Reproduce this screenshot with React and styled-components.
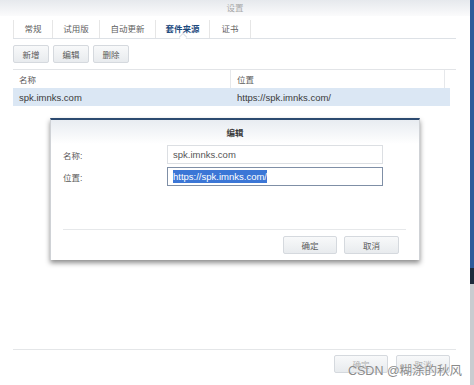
import React from "react";
import styled, { createGlobalStyle } from "styled-components";

const Global = createGlobalStyle`
  html, body { margin: 0; padding: 0; background: #ffffff; }
  body { font-family: "Liberation Sans", "Noto Sans CJK SC", sans-serif; }
  #root { width: 474px; height: 385px; overflow: hidden; }
`;

const CJK = `"Liberation Sans", "Noto Sans CJK SC", sans-serif`;

const Screen = styled.div`
  display: flex;
  width: 474px;
  height: 385px;
`;

const Win = styled.div`
  position: relative;
  width: 470px;
  height: 385px;
  background: #ffffff;
  display: flex;
  flex-direction: column;
`;

const Strip = styled.div`
  width: 4px;
  display: flex;
  flex-direction: column;
`;

const StripPart = styled.div`
  height: ${(p) => p.h}px;
  flex: ${(p) => (p.h ? "none" : 1)};
  background: ${(p) => p.c};
`;

const Header = styled.div`
  height: 16px;
  line-height: 16px;
  text-align: center;
  font-family: ${CJK};
  font-size: 8.5px;
  color: #a8a8a8;
  background: linear-gradient(#e6e9ed, #fbfbfc);
`;

const Tabs = styled.div`
  margin: 0 14px 0 13px;
  height: 22px;
  display: flex;
  border-bottom: 1px solid #dde1e6;
  position: relative;
`;

const Tab = styled.div`
  position: relative;
  width: ${(p) => p.w}px;
  display: flex;
  align-items: center;
  justify-content: center;
  font-family: ${CJK};
  font-size: 8.5px;
  color: ${(p) => (p.active ? "#1d4a7e" : "#606060")};
  font-weight: ${(p) => (p.active ? 700 : 400)};
  border-right: 1px solid #e6e6e6;
  margin: 4px 0 0;
  padding-bottom: 3px;
  &:first-child { border-left: 1px solid #e6e6e6; }
  ${(p) =>
    p.active &&
    `
    &::after {
      content: "";
      position: absolute;
      left: 50%;
      bottom: -2px;
      margin-left: -3px;
      width: 5px;
      height: 5px;
      background: #fff;
      border-left: 1px solid #dde1e6;
      border-top: 1px solid #dde1e6;
      transform: rotate(45deg);
    }
  `}
`;

const Toolbar = styled.div`
  display: flex;
  gap: 4px;
  margin: 6px 0 0 13px;
`;

const Btn = styled.div`
  width: ${(p) => p.w || 36}px;
  height: 18px;
  box-sizing: border-box;
  border: 1px solid #d5d9de;
  border-radius: 2px;
  background: linear-gradient(#f8f9fa, #e8ebee);
  display: flex;
  align-items: center;
  justify-content: center;
  font-family: ${CJK};
  font-size: 8.5px;
  color: #5a5a5a;
`;

const Table = styled.div`
  margin: 6px 14px 0 13px;
  border-top: 1px solid #e2e4e7;
`;

const Row = styled.div`
  display: grid;
  grid-template-columns: 218px 214px 5px;
  height: ${(p) => p.h}px;
  width: 437px;
  background: ${(p) => (p.sel ? "#dbe7f4" : "transparent")};
`;

const Cell = styled.div`
  display: flex;
  align-items: center;
  padding-left: 6px;
  font-family: ${(p) => (p.latin ? `"Liberation Sans", sans-serif` : CJK)};
  font-size: ${(p) => (p.latin ? "9.5px" : "8.5px")};
  color: ${(p) => (p.latin ? "#3a3a3a" : "#5a5a5a")};
  border-right: ${(p) => (p.div ? "1px solid #e6e8eb" : "none")};
  white-space: nowrap;
`;

const Spacer = styled.div`
  flex: 1;
`;

const Footer = styled.div`
  margin: 0 14px 0 13px;
  border-top: 1px solid #e4e6e8;
  height: 30px;
  display: flex;
  justify-content: flex-end;
  align-items: flex-start;
  padding-top: 5px;
  gap: 8px;
  padding-right: 6px;
`;

const FootBtn = styled(Btn)`
  color: #b0b0b0;
`;

const Watermark = styled.div`
  position: absolute;
  left: 348px;
  top: 360px;
  font-family: "Liberation Sans", "Noto Sans CJK SC", sans-serif;
  font-size: 12.5px;
  color: #8a8a8a;
  text-shadow: 0 0 1px #fff;
  white-space: nowrap;
`;

const Dialog = styled.div`
  position: absolute;
  left: 50px;
  top: 118px;
  width: 370px;
  height: 142px;
  box-sizing: border-box;
  background: #ffffff;
  border-top: 2px solid #2c4a70;
  border-left: 1px solid #cfd2d6;
  border-right: 1px solid #cfd2d6;
  box-shadow: 0 3px 5px rgba(0, 0, 0, 0.45);
  display: flex;
  flex-direction: column;
`;

const DlgHead = styled.div`
  height: 24px;
  display: flex;
  align-items: center;
  justify-content: center;
  font-family: ${CJK};
  font-size: 8.5px;
  font-weight: 700;
  color: #3a3a3a;
  background: linear-gradient(#e8ecf1, #ffffff);
`;

const Form = styled.div`
  display: flex;
  flex-direction: column;
  gap: 3px;
  padding: 1px 0 0 12px;
`;

const FormRow = styled.div`
  display: flex;
  align-items: center;
  height: 19px;
`;

const Label = styled.div`
  width: 104px;
  font-family: ${CJK};
  font-size: 8.5px;
  color: #5a5a5a;
`;

const Field = styled.div`
  width: 216px;
  height: 19px;
  box-sizing: border-box;
  border: 1px solid ${(p) => (p.focus ? "#7f8fa6" : "#dcdfe3")};
  display: flex;
  align-items: center;
  padding-left: 5px;
  font-family: "Liberation Sans", sans-serif;
  font-size: 9.5px;
  color: #555;
  white-space: nowrap;
`;

const Selected = styled.span`
  background: #3b76d6;
  color: #ffffff;
  padding: 1px 0;
`;

const DlgSep = styled.div`
  margin: auto 13px 0 12px;
  border-top: 1px solid #e6e8ea;
`;

const DlgFoot = styled.div`
  display: flex;
  justify-content: flex-end;
  gap: 7px;
  padding: 6px 20px 6px 0;
`;

export default function App() {
  return (
    <>
      <Global />
      <Screen>
        <Win>
          <Header>设置</Header>
          <Tabs>
            <Tab w={38}>常规</Tab>
            <Tab w={46}>试用版</Tab>
            <Tab w={55}>自动更新</Tab>
            <Tab w={53} active>套件来源</Tab>
            <Tab w={40}>证书</Tab>
          </Tabs>
          <Toolbar>
            <Btn>新增</Btn>
            <Btn>编辑</Btn>
            <Btn>删除</Btn>
          </Toolbar>
          <Table>
            <Row h={18}>
              <Cell div>名称</Cell>
              <Cell div>位置</Cell>
              <Cell />
            </Row>
            <Row h={18} sel>
              <Cell latin>spk.imnks.com</Cell>
              <Cell latin>https://spk.imnks.com/</Cell>
              <Cell />
            </Row>
          </Table>
          <Spacer />
          <Footer>
            <FootBtn w={54}>确定</FootBtn>
            <FootBtn w={54}>取消</FootBtn>
          </Footer>

          <Dialog>
            <DlgHead>编辑</DlgHead>
            <Form>
              <FormRow>
                <Label>名称:</Label>
                <Field>spk.imnks.com</Field>
              </FormRow>
              <FormRow>
                <Label>位置:</Label>
                <Field focus>
                  <Selected>https://spk.imnks.com/</Selected>
                </Field>
              </FormRow>
            </Form>
            <DlgSep />
            <DlgFoot>
              <Btn w={54}>确定</Btn>
              <Btn w={55}>取消</Btn>
            </DlgFoot>
          </Dialog>
          <Watermark>CSDN @糊涂的秋风</Watermark>
        </Win>
        <Strip>
          <StripPart h={268} c="#2f5b9a" />
          <StripPart h={16} c="#1e2b3c" />
          <StripPart c="#c9ccd0" />
        </Strip>
      </Screen>
    </>
  );
}
